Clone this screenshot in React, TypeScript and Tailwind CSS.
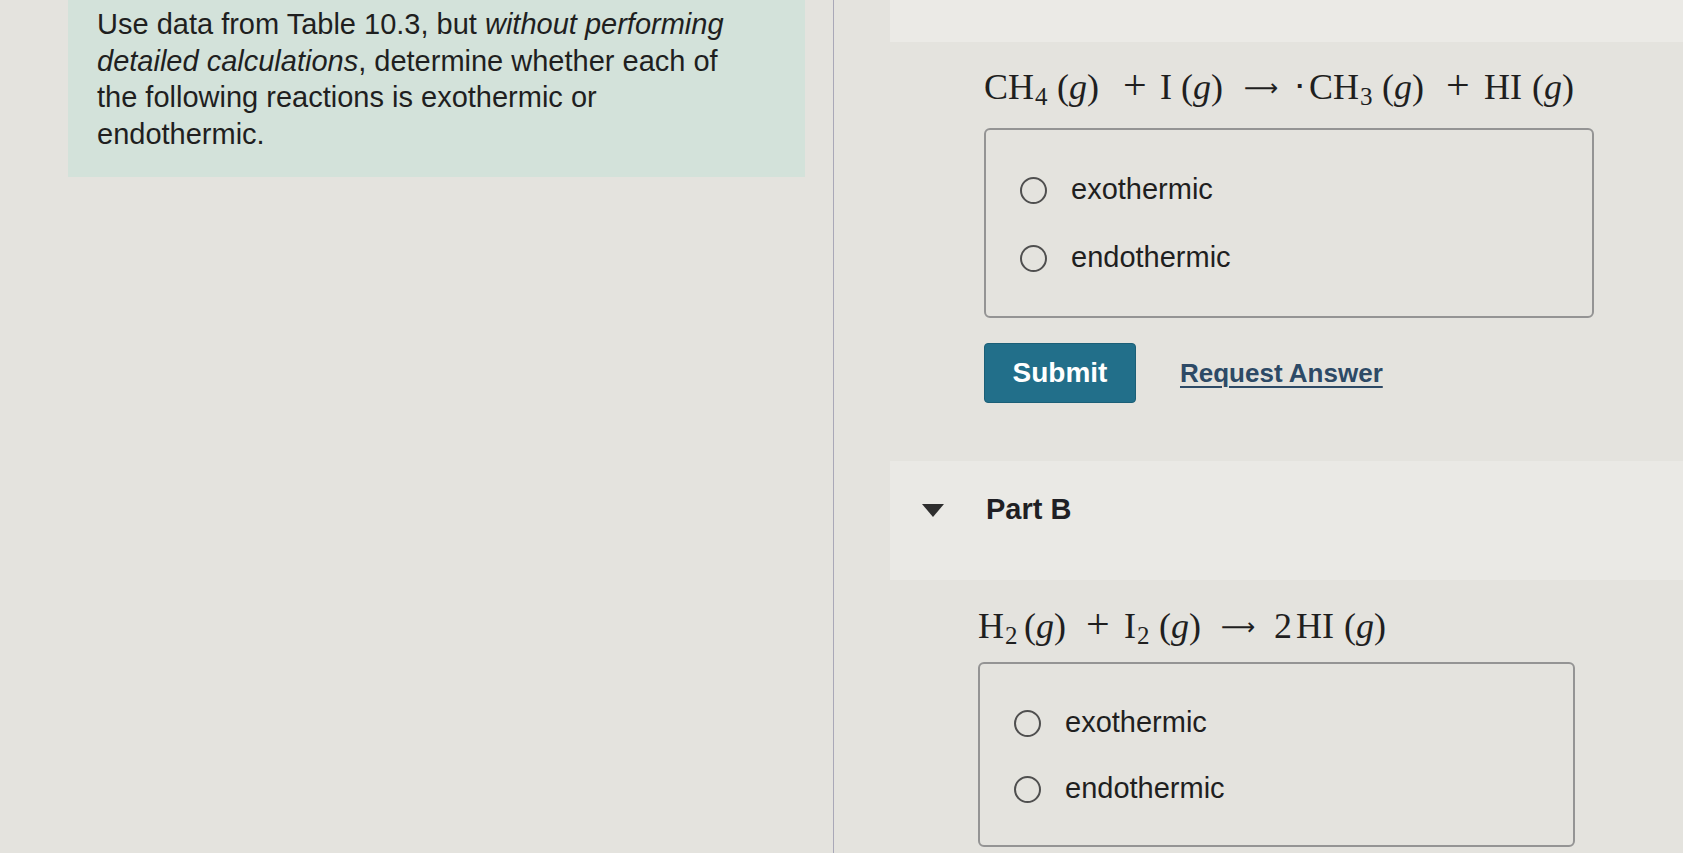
import React from "react";

const serif = "font-['Liberation_Serif','Times_New_Roman',serif]";

function G() {
  return (
    <span>
      (<i>g</i>)
    </span>
  );
}

function Plus() {
  return <span className="text-[42px] leading-none">+</span>;
}

function Arrow() {
  return (
    <span className="font-['DejaVu_Sans','DejaVu_Serif',sans-serif] text-[24px] leading-none relative -top-[3px]">⟶</span>
  );
}

function Sub({ children }: { children: React.ReactNode }) {
  return <sub className="text-[25px] -bottom-[6px] ml-[1px]">{children}</sub>;
}

function Option({ label }: { label: string }) {
  return (
    <div className="flex items-center h-[36px]">
      <span className="w-[27px] h-[27px] rounded-full border-2 border-[#4f4f4f] shrink-0" />
      <span className="ml-[24px]">{label}</span>
    </div>
  );
}

export default function App() {
  return (
    <div className="w-[1683px] h-[853px] overflow-hidden flex bg-[#e4e3de] text-[#1f1f1f] font-['Liberation_Sans',Arial,sans-serif] text-[29px]">
      {/* Left column */}
      <div className="w-[834px] shrink-0 border-r border-[#a9a8b8] pl-[68px]">
        <div className="w-[737px] h-[177px] bg-[#d3e2da] pl-[29px] pt-[6px] leading-[36.5px] whitespace-nowrap">
          Use data from Table 10.3, but <i>without performing</i>
          <br />
          <i>detailed calculations</i>, determine whether each of
          <br />
          the following reactions is exothermic or
          <br />
          endothermic.
        </div>
      </div>

      {/* Right column */}
      <div className="flex-1 flex flex-col pl-[56px]">
        <div className="h-[42px] bg-[#ebeae6] shrink-0" />

        <div className="pl-[94px]">
          <div className={`mt-[22px] h-[44px] flex items-baseline text-[36px] leading-[44px] whitespace-nowrap ${serif}`}>
            <span className="inline-block w-[73px]">
              CH<Sub>4</Sub>
            </span>
            <span className="inline-block w-[66px]">
              <G />
            </span>
            <span className="inline-block w-[37px]">
              <Plus />
            </span>
            <span className="inline-block w-[21px]">I</span>
            <span className="inline-block w-[63px]">
              <G />
            </span>
            <span className="inline-block w-[50px]">
              <Arrow />
            </span>
            <span className="inline-block w-[88px]">
              <span className="mr-[4px]">⋅</span>CH<Sub>3</Sub>
            </span>
            <span className="inline-block w-[64px]">
              <G />
            </span>
            <span className="inline-block w-[38px]">
              <Plus />
            </span>
            <span className="inline-block w-[48px]">HI</span>
            <span className="inline-block">
              <G />
            </span>
          </div>

          <div className="mt-[20px] w-[610px] h-[190px] border-2 border-[#949494] rounded-[6px] pl-[34px] pt-[42px] flex flex-col gap-[32px]">
            <Option label="exothermic" />
            <Option label="endothermic" />
          </div>

          <div className="mt-[25px] flex items-center">
            <button className="w-[152px] h-[60px] bg-[#226f8a] border border-[#1b5f77] rounded-[4px] text-white font-bold text-[28px] flex items-center justify-center">
              Submit
            </button>
            <span className="ml-[44px] text-[26px] font-bold text-[#2d4a66] underline underline-offset-[4px] decoration-[2px]">
              Request Answer
            </span>
          </div>
        </div>

        <div className="mt-[58px] h-[119px] shrink-0 bg-[#eae9e5] flex items-start pt-[34px] pl-[32px]">
          <div className="h-[30px] flex items-center">
            <svg width="22" height="13" viewBox="0 0 22 13" className="shrink-0">
              <polygon points="0,0 22,0 11,13" fill="#2e2e2e" />
            </svg>
            <span className="ml-[42px] font-bold text-[29px] text-[#1f1f24]">Part B</span>
          </div>
        </div>

        <div className="pl-[88px]">
          <div className={`mt-[23px] h-[44px] flex items-baseline text-[36px] leading-[44px] whitespace-nowrap ${serif}`}>
            <span className="inline-block w-[46px]">
              H<Sub>2</Sub>
            </span>
            <span className="inline-block w-[62px]">
              <G />
            </span>
            <span className="inline-block w-[38px]">
              <Plus />
            </span>
            <span className="inline-block w-[35px]">
              I<Sub>2</Sub>
            </span>
            <span className="inline-block w-[62px]">
              <G />
            </span>
            <span className="inline-block w-[53px]">
              <Arrow />
            </span>
            <span className="inline-block w-[22px]">2</span>
            <span className="inline-block w-[48px]">HI</span>
            <span className="inline-block">
              <G />
            </span>
          </div>

          <div className="mt-[15px] w-[597px] h-[185px] border-2 border-[#949494] rounded-[6px] pl-[34px] pt-[41px] flex flex-col gap-[30px]">
            <Option label="exothermic" />
            <Option label="endothermic" />
          </div>
        </div>
      </div>
    </div>
  );
}
